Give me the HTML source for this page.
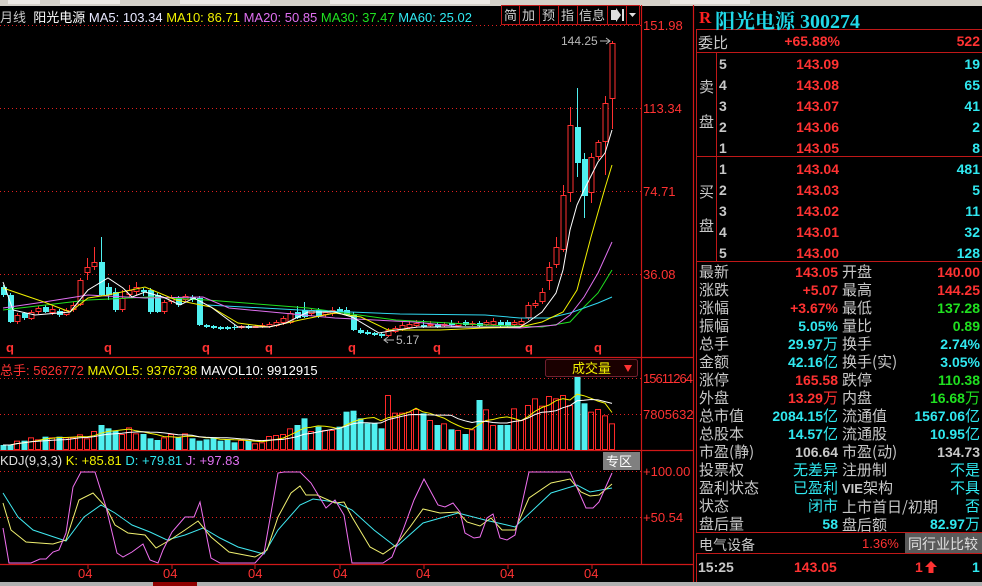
<!DOCTYPE html>
<html><head><meta charset="utf-8">
<style>
*{margin:0;padding:0;box-sizing:border-box}
body{width:982px;height:586px;background:#000;overflow:hidden;position:relative;font-family:"Liberation Sans","WenQuanYi Zen Hei",sans-serif}
.a{position:absolute;white-space:nowrap}
.n{font-family:"Liberation Sans",sans-serif;font-weight:bold;font-size:14px}
.l{font-family:"WenQuanYi Zen Hei","Noto Sans CJK SC",sans-serif;font-size:15px;color:#c8c8c8}
.r{color:#ff3232}.c{color:#30e8f0}.g{color:#20e020}.w{color:#c8c8c8}.y{color:#f0f000}.v{color:#e070f0}
.rt{text-align:right}
</style></head><body>
<div class="a" style="left:0;top:0;width:982px;height:6px;background:#d4d0c8"></div>
<div class="a" style="left:8px;top:0;width:32px;height:4px;background:#ece9e4"></div>
<div class="a" style="left:60px;top:0;width:60px;height:4px;background:#ece9e4"></div>
<div class="a" style="left:180px;top:0;width:90px;height:4px;background:#ece9e4"></div>
<div class="a" style="left:330px;top:0;width:160px;height:4px;background:#ece9e4"></div>
<div class="a" style="left:670px;top:0;width:80px;height:4px;background:#ece9e4"></div>

<svg class="a" style="left:0;top:0" width="982" height="586" id="s">
<g stroke="#e02020" stroke-width="1" stroke-dasharray="1,3">
<line x1="0" y1="25.5" x2="641" y2="25.5"/><line x1="0" y1="108.5" x2="641" y2="108.5"/>
<line x1="0" y1="191.5" x2="641" y2="191.5"/><line x1="0" y1="274.5" x2="641" y2="274.5"/>
<line x1="0" y1="378.5" x2="641" y2="378.5"/><line x1="0" y1="414.5" x2="641" y2="414.5"/>
<line x1="0" y1="471.5" x2="641" y2="471.5"/><line x1="0" y1="517.5" x2="641" y2="517.5"/>
</g>
<g stroke="#d01818" stroke-width="1.2">
<line x1="641.5" y1="5" x2="641.5" y2="564"/>
<line x1="0" y1="357.5" x2="693" y2="357.5"/>
<line x1="0" y1="450.5" x2="693" y2="450.5"/>
<line x1="0" y1="564.5" x2="693" y2="564.5"/>
<line x1="693.5" y1="5" x2="693.5" y2="586"/>
</g>
<g id="cd"></g><g id="ma" fill="none" stroke-width="1"></g>
<g id="vol"></g><g id="kdj" fill="none" stroke-width="1"></g>
<g stroke="#d01818"><line x1="88" y1="564" x2="88" y2="569"/><line x1="172" y1="564" x2="172" y2="569"/><line x1="255" y1="564" x2="255" y2="569"/><line x1="340" y1="564" x2="340" y2="569"/><line x1="424" y1="564" x2="424" y2="569"/><line x1="508" y1="564" x2="508" y2="569"/><line x1="592" y1="564" x2="592" y2="569"/></g>
<g fill="#ff3232" font-size="13" font-family="Liberation Sans">
<text x="643" y="30">151.98</text><text x="643" y="113">113.34</text><text x="643" y="196">74.71</text><text x="643" y="279">36.08</text>
<text x="643" y="383" textLength="50">15611264</text><text x="643" y="419">7805632</text><text x="643" y="476">+100.00</text><text x="643" y="522">+50.54</text>
<text x="78" y="578">04</text><text x="163" y="578">04</text><text x="248" y="578">04</text><text x="333" y="578">04</text><text x="416" y="578">04</text><text x="500" y="578">04</text><text x="584" y="578">04</text>
</g>
<g fill="#ff3232" font-size="13" font-weight="bold" font-family="Liberation Sans">
<text x="6" y="352">q</text><text x="104" y="352">q</text><text x="202" y="352">q</text><text x="265" y="352">q</text><text x="348" y="352">q</text><text x="433" y="352">q</text><text x="525" y="352">q</text><text x="594" y="352">q</text>
</g>
<g fill="#b8b8b8" font-size="12" font-family="Liberation Sans">
<text x="561" y="45">144.25</text><text x="396" y="344">5.17</text></g>
<g stroke="#b8b8b8"><line x1="600" y1="41" x2="610" y2="41"/><path d="M606 38l4 3-4 3" fill="none"/><line x1="384" y1="340" x2="394" y2="340"/><path d="M388 337l-4 3 4 3" fill="none"/></g>
<rect x="501.5" y="5.5" width="138" height="19" fill="#000" stroke="#c01818"/>
<g stroke="#c01818"><line x1="519.5" y1="5" x2="519.5" y2="24"/><line x1="539.5" y1="5" x2="539.5" y2="24"/><line x1="558.5" y1="5" x2="558.5" y2="24"/><line x1="577.5" y1="5" x2="577.5" y2="24"/><line x1="607.5" y1="5" x2="607.5" y2="24"/><line x1="626.5" y1="5" x2="626.5" y2="24"/></g>
<g fill="#d0d0d0" font-size="13" font-family="WenQuanYi Zen Hei,sans-serif"><text x="504" y="20">简</text><text x="522" y="20">加</text><text x="542" y="20">预</text><text x="561" y="20">指</text><text x="579" y="20">信息</text></g>
<path d="M611 10h5v-2l5 7-5 7v-2h-5z" fill="#e0e0e0"/><rect x="622" y="9" width="2" height="12" fill="#e0e0e0"/>
<path d="M629 13h7l-3.5 4z" fill="#e0e0e0"/>
<rect x="545.5" y="359.5" width="92" height="17" rx="2" fill="#1a0000" stroke="#702030"/>
<text x="572" y="373" fill="#f0f000" font-size="13" font-family="WenQuanYi Zen Hei,sans-serif">成交量</text>
<path d="M624 365h8l-4 7z" fill="#ff3232"/>
<rect x="603" y="452" width="37" height="18" fill="#808080"/>
<text x="606" y="466" fill="#fff" font-size="13" font-family="WenQuanYi Zen Hei,sans-serif">专区</text>
<g stroke="#c01818" fill="none">
<rect x="696.5" y="29.5" width="290" height="503"/>
<line x1="697" y1="52.5" x2="982" y2="52.5"/><line x1="697" y1="156.5" x2="982" y2="156.5"/><line x1="697" y1="261.5" x2="982" y2="261.5"/>
<line x1="716.5" y1="52" x2="716.5" y2="261"/>
<rect x="696.5" y="553.5" width="290" height="40"/>
</g>
<rect x="905" y="533" width="77" height="20" fill="#5a5a5a"/>
<rect x="0" y="582" width="982" height="4" fill="#b0b0b0"/><rect x="153" y="582" width="44" height="4" fill="#900000"/>
</svg>

<div class="a" style="left:0;top:7px;font-size:13px"><span class="w">月线&nbsp; </span><span style="color:#fff">阳光电源</span> <span style="color:#e8e8ff">MA5: 103.34</span> <span class="y">MA10: 86.71</span> <span class="v">MA20: 50.85</span> <span class="g">MA30: 37.47</span> <span class="c">MA60: 25.02</span></div>
<div class="a" style="left:0;top:360px;font-size:13px"><span class="r">总手: 5626772</span> <span class="y">MAVOL5: 9376738</span> <span style="color:#fff">MAVOL10: 9912915</span></div>
<div class="a" style="left:0;top:453px;font-size:13px"><span style="color:#e0e0e0">KDJ(9,3,3)</span> <span class="y">K: +85.81</span> <span class="c">D: +79.81</span> <span class="v">J: +97.83</span></div>

<div class="a" style="left:699px;top:8px;font-family:'Liberation Serif',serif;font-weight:900;font-size:17px;color:#ff2020">R</div>
<div class="a" style="left:715px;top:5px;font-family:'Liberation Serif','Noto Serif CJK SC',serif;font-weight:bold;font-size:20px;color:#20d8e8">阳光电源 300274</div>

<script>
var NS="http://www.w3.org/2000/svg";
function el(p,t,a){var e=document.createElementNS(NS,t);for(var k in a)e.setAttribute(k,a[k]);p.appendChild(e);return e;}
var C=[[287,295,285,297,0],[295,322,293,323,0],[315,322,313,324,1],[313,318,312,320,0],[312,319,310,320,1],[308,312,306,314,1],[307,312,305,313,0],[309,313,306,315,1],[311,315,309,317,0],[310,315,308,316,1],[305,310,302,312,1],[280,305,278,306,1],[267,273,258,280,1],[262,267,247,270,1],[262,295,237,296,0],[287,295,283,300,0],[292,310,288,312,0],[298,310,290,312,1],[290,295,285,297,1],[287,292,282,295,1],[290,292,288,296,0],[290,312,288,314,0],[295,312,293,313,0],[302,312,300,314,1],[297,302,295,304,1],[298,305,296,307,0],[296,300,294,302,1],[297,300,295,302,0],[298,325,296,326,0],[325,327,324,328,0],[326,328,325,329,0],[327,329,326,330,0],[327,329,326,330,0],[327,328,325,330,0],[326,327,325,329,1],[326,328,325,329,0],[326,327,325,328,1],[325,327,323,328,1],[324,327,322,328,1],[322,326,320,327,1],[318,323,316,325,1],[313,323,311,324,1],[312,318,306,319,0],[310,317,302,318,0],[310,314,308,316,1],[310,316,308,318,0],[312,315,310,317,1],[310,314,307,316,1],[309,312,307,314,0],[310,315,307,316,0],[315,330,312,331,0],[330,333,328,334,0],[332,334,330,335,0],[333,335,332,336,0],[334,336,333,338,0],[330,336,328,337,1],[328,332,326,333,1],[325,330,322,331,1],[324,328,321,329,1],[323,326,320,327,1],[325,327,320,328,0],[324,326,321,327,1],[324,327,322,328,0],[324,326,322,327,1],[323,325,320,327,0],[323,326,321,327,1],[322,325,320,326,0],[323,325,321,326,1],[323,326,321,327,0],[322,325,320,326,1],[321,325,318,326,1],[322,325,320,327,0],[322,326,320,327,0],[322,325,320,326,1],[321,325,318,326,1],[305,318,302,320,1],[303,306,300,308,1],[292,302,288,304,1],[267,281,262,290,1],[247,265,237,268,1],[195,250,185,252,1],[125,193,107,202,1],[127,163,88,177,0],[159,196,153,218,0],[157,193,153,203,1],[142,157,140,160,1],[103,142,96,175,1],[43,99,41,129,1]];
var cd=document.getElementById("cd");
C.forEach(function(c,i){var x=3+7*i,col=c[4]?"#ff3030":"#50f0f0";
el(cd,"line",{x1:x+.5,y1:c[2],x2:x+.5,y2:c[0],stroke:col});
el(cd,"line",{x1:x+.5,y1:c[1],x2:x+.5,y2:c[3],stroke:col});
var h=Math.max(c[1]-c[0],1);
if(c[4])el(cd,"rect",{x:x-2,y:c[0]+.5,width:5,height:h-1<1?1:h-1,fill:"#000",stroke:col});
else el(cd,"rect",{x:x-2,y:c[0],width:6,height:h,fill:col});});
var ma=document.getElementById("ma");
function pl(g,pts,col){el(g,"polyline",{points:pts,stroke:col});}
pl(ma,"3,310 88,300 150,297 207,300 308,308 396,320 485,325 542,327 570,322 584,307 598,293 612,270","#20e020");
pl(ma,"207,305 300,310 400,314 485,315 520,318 549,318 570,313 598,303 612,297","#30d8f0");
pl(ma,"3,308 44,302 88,295 145,298 203,297 229,308 335,318 414,322 463,327 520,328 556,325 570,315 584,297 598,273 612,242","#e070f0");
pl(ma,"3,288 44,302 70,312 88,298 108,295 145,287 176,300 211,307 238,323 269,327 300,320 335,313 361,317 388,330 440,330 485,328 520,327 542,322 563,312 577,290 591,237 605,188 612,165","#f0f000");
pl(ma,"3,282 13,310 35,315 70,312 88,290 108,278 123,288 132,297 145,292 163,297 180,305 194,298 211,307 238,327 269,327 286,323 308,312 335,312 352,317 379,333 396,330 418,327 485,327 520,327 528,322 542,312 556,293 563,270 570,230 577,205 584,190 598,162 605,153 612,130","#ffffff");
var T=[645,645,632,632,622,628,620,622,620,622,622,613,625,603,585,595,603,612,592,610,612,625,630,622,612,622,610,625,632,628,622,632,628,637,630,632,640,637,618,615,612,595,585,565,603,590,600,600,590,545,542,565,580,580,595,495,548,548,545,537,550,570,585,580,598,600,612,598,510,538,585,585,585,535,570,525,505,527,498,505,495,525,440,520,545,537,556,580];
var vg=document.getElementById("vol"),H=[];
C.forEach(function(c,i){var h=(660-(T[i]||640))/3;H.push(h);var x=3+7*i;
if(c[4])el(vg,"rect",{x:x-2.5,y:450-h+.5,width:5,height:h-1,fill:"none",stroke:"#ff2828"});
else el(vg,"rect",{x:x-2.5,y:450-h,width:6,height:h,fill:"#50f0f0"});});
function mav(n){var p=[];for(var i=0;i<H.length;i++){var s=0,k=0;for(var j=Math.max(0,i-n+1);j<=i;j++){s+=H[j];k++;}p.push((3+7*i)+","+(450-s/k).toFixed(1));}return p.join(" ");}
var vm=el(vg,"g",{fill:"none"});pl(vm,mav(5),"#f0f000");pl(vm,mav(10),"#ffffff");
var kg=document.getElementById("kdj");
pl(kg,"3,493 18,517 33,530 66,541 84,517 101,505 115,513 132,525 150,532 167,540 185,535 203,528 220,538 238,547 264,554 278,530 300,505 313,499 335,502 352,510 374,530 396,547 423,523 458,513 485,520 507,525 515,527 551,493 577,485 590,492 612,488","#40e8f0");
pl(kg,"3,503 11,530 26,542 53,544 66,540 79,500 93,493 106,507 115,525 128,533 145,535 156,548 170,540 185,530 198,521 211,537 229,552 255,557 267,550 278,517 291,493 300,486 306,495 317,495 335,503 344,502 352,517 370,547 383,554 396,545 410,527 423,509 440,513 458,512 467,522 480,526 491,518 502,530 515,530 529,498 551,483 570,479 581,492 590,496 599,495 612,484","#f0f070");
pl(kg,"3,528 9,563 31,563 40,559 46,559 53,552 59,550 66,533 73,487 81,472 95,472 106,507 117,553 123,557 132,552 143,544 150,560 158,563 163,550 172,532 185,517 194,517 200,502 207,538 211,558 220,563 255,563 264,553 278,473 284,472 300,472 311,483 326,508 335,500 344,515 352,563 383,563 392,557 403,530 414,500 424,479 438,505 445,507 453,503 460,512 465,533 474,538 480,537 487,518 493,514 500,538 507,540 515,535 529,472 570,472 586,508 593,508 599,502 612,473","#f070f0");
</script>

<div class="a l" style="left:699px;top:535px;font-size:14px">电气设备</div>
<div class="a" style="left:862px;top:536px;font-size:13px;color:#ff3232">1.36%</div>
<div class="a l" style="left:908px;top:534px;font-size:14px;color:#e0e0e0">同行业比较</div>
<div class="a n w" style="left:698px;top:559px">15:25</div>
<div class="a n r" style="left:794px;top:559px">143.05</div>
<div class="a n r" style="left:915px;top:559px">1</div>
<svg class="a" style="left:924px;top:560px" width="14" height="14"><path d="M7 1l6 6h-3.5v6h-5v-6h-3.5z" fill="#ff3232"/></svg>
<div class="a n c" style="left:972px;top:559px">1</div>

<div class="a l" style="left:698px;top:32px">委比</div>
<div class="a n r" style="left:760px;top:33px;width:80px;text-align:right">+65.88%</div>
<div class="a n r" style="left:900px;top:33px;width:80px;text-align:right">522</div>
<div class="a l" style="left:699px;top:76px">卖</div><div class="a l" style="left:699px;top:111px">盘</div>
<div class="a l" style="left:699px;top:181px">买</div><div class="a l" style="left:699px;top:215px">盘</div>

<div class="a n w" style="left:719px;top:54px;line-height:21px">5<br>4<br>3<br>2<br>1</div>
<div class="a n r rt" style="left:760px;top:54px;width:79px;line-height:21px">143.09<br>143.08<br>143.07<br>143.06<br>143.05</div>
<div class="a n c rt" style="left:900px;top:54px;width:80px;line-height:21px">19<br>65<br>41<br>2<br>8</div>
<div class="a n w" style="left:719px;top:159px;line-height:21px">1<br>2<br>3<br>4<br>5</div>
<div class="a n r rt" style="left:760px;top:159px;width:79px;line-height:21px">143.04<br>143.03<br>143.02<br>143.01<br>143.00</div>
<div class="a n c rt" style="left:900px;top:159px;width:80px;line-height:21px">481<br>5<br>11<br>32<br>128</div>

<div class="a l" style="left:699px;top:263px;line-height:18px">最新<br>涨跌<br>涨幅<br>振幅<br>总手<br>金额<br>涨停<br>外盘<br>总市值<br>总股本<br>市盈(静)<br>投票权<br>盈利状态<br>状态<br>盘后量</div>
<div class="a l" style="left:842px;top:263px;line-height:18px">开盘<br>最高<br>最低<br>量比<br>换手<br>换手(实)<br>跌停<br>内盘<br>流通值<br>流通股<br>市盈(动)<br>注册制<br><b style="font-family:'Liberation Sans';font-size:13px">VIE</b>架构<br>上市首日/初期<br>盘后额</div>
<div class="a n rt" style="left:738px;top:263px;width:100px;line-height:18px"><span class="r">143.05</span><br><span class="r">+5.07</span><br><span class="r">+3.67%</span><br><span class="c">5.05%</span><br><span class="c">29.97<span class="l c" style="font-weight:normal">万</span></span><br><span class="c">42.16<span class="l c" style="font-weight:normal">亿</span></span><br><span class="r">165.58</span><br><span class="r">13.29<span class="l r" style="font-weight:normal">万</span></span><br><span class="c">2084.15<span class="l c" style="font-weight:normal">亿</span></span><br><span class="c">14.57<span class="l c" style="font-weight:normal">亿</span></span><br><span class="w">106.64</span><br><span class="l c" style="font-weight:normal">无差异</span><br><span class="l c" style="font-weight:normal">已盈利</span><br><span class="l c" style="font-weight:normal">闭市</span><br><span class="c">58</span></div>
<div class="a n rt" style="left:880px;top:263px;width:100px;line-height:18px"><span class="r">140.00</span><br><span class="r">144.25</span><br><span class="g">137.28</span><br><span class="g">0.89</span><br><span class="c">2.74%</span><br><span class="c">3.05%</span><br><span class="g">110.38</span><br><span class="g">16.68<span class="l g" style="font-weight:normal">万</span></span><br><span class="c">1567.06<span class="l c" style="font-weight:normal">亿</span></span><br><span class="c">10.95<span class="l c" style="font-weight:normal">亿</span></span><br><span class="w">134.73</span><br><span class="l c" style="font-weight:normal">不是</span><br><span class="l c" style="font-weight:normal">不具</span><br><span class="l c" style="font-weight:normal">否</span><br><span class="c">82.97<span class="l c" style="font-weight:normal">万</span></span></div>
</body></html>
